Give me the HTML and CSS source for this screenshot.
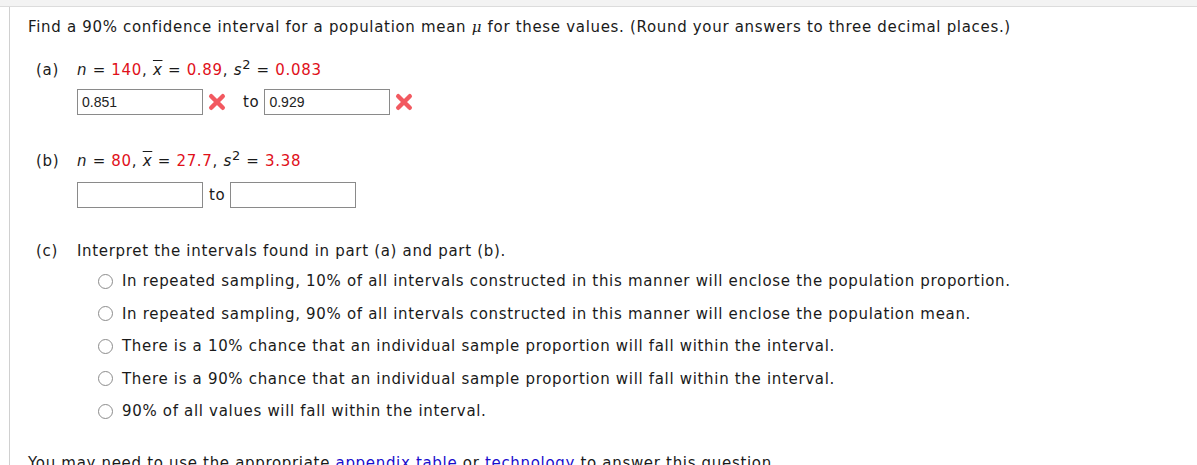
FILE: index.html
```html
<!DOCTYPE html>
<html>
<head>
<meta charset="utf-8">
<link rel="stylesheet" href="styles.css">
</head>
<body>
<div class="topband"></div>
<div class="panel">
  <p class="intro">Find a 90% confidence interval for a population mean <i class="mu">μ</i> for these values. (Round your answers to three decimal places.)</p>

  <div class="part part-a">
    <span class="lbl">(a)</span>
    <span class="given"><i>n</i> = <span class="val">140</span>, <i class="xbar">x</i> = <span class="val">0.89</span>, <i class="s">s</i><sup>2</sup> = <span class="val">0.083</span></span>
  </div>
  <div class="answers ans-a">
    <span class="box">0.851</span>
    <svg class="wrong" width="18" height="18" viewBox="0 0 18 18"><path d="M3.2 3.2 L14.8 14.8 M14.8 3.2 L3.2 14.8" stroke="#f25960" stroke-width="4.4" stroke-linecap="round"/></svg>
    <span class="to to-wide">to</span>
    <span class="box">0.929</span>
    <svg class="wrong" width="18" height="18" viewBox="0 0 18 18"><path d="M3.2 3.2 L14.8 14.8 M14.8 3.2 L3.2 14.8" stroke="#f25960" stroke-width="4.4" stroke-linecap="round"/></svg>
  </div>

  <div class="part part-b">
    <span class="lbl">(b)</span>
    <span class="given"><i>n</i> = <span class="val">80</span>, <i class="xbar">x</i> = <span class="val">27.7</span>, <i class="s">s</i><sup>2</sup> = <span class="val">3.38</span></span>
  </div>
  <div class="answers ans-b">
    <span class="box"></span>
    <span class="to">to</span>
    <span class="box"></span>
  </div>

  <div class="part part-c">
    <span class="lbl">(c)</span>
    <span class="given">Interpret the intervals found in part (a) and part (b).</span>
  </div>
  <ul class="choices">
    <li><span class="radio"></span>In repeated sampling, 10% of all intervals constructed in this manner will enclose the population proportion.</li>
    <li><span class="radio"></span>In repeated sampling, 90% of all intervals constructed in this manner will enclose the population mean.</li>
    <li><span class="radio"></span>There is a 10% chance that an individual sample proportion will fall within the interval.</li>
    <li><span class="radio"></span>There is a 90% chance that an individual sample proportion will fall within the interval.</li>
    <li><span class="radio"></span>90% of all values will fall within the interval.</li>
  </ul>

  <p class="note">You may need to use the appropriate <a href="#">appendix table</a> or <a href="#">technology</a> to answer this question.</p>
</div>
</body>
</html>
```
FILE: styles.css
```css
html, body {
  margin: 0;
  padding: 0;
  background: #fff;
}
body {
  font-family: "DejaVu Sans", Verdana, sans-serif;
  font-size: 15px;
  line-height: 20px;
  letter-spacing: 0.68px;
  color: #1a1a1a;
  overflow: hidden;
  height: 465px;
}
.topband {
  height: 6px;
  background: #f3f3f3;
  border-bottom: 1px solid #dcdcdc;
}
.panel {
  margin-left: 9px;
  border-left: 1px solid #d0d0d0;
  padding-left: 18px;
  padding-top: 10px;
  height: 600px;
}
.intro {
  margin: 0;
}
.mu {
  font-family: "DejaVu Serif", serif;
}
.part {
  display: flex;
  margin-left: 8px;
}
.lbl {
  width: 41px;
  flex: none;
}
.part-a { margin-top: 23px; }
.part-b { margin-top: 36px; }
.part-c { margin-top: 33px; }
.val { color: #e0101a; }
.xbar {
  text-decoration: overline;
  text-decoration-thickness: 1px;
}
sup {
  font-size: 13px;
  line-height: 0;
  vertical-align: 6px;
}
.answers {
  display: flex;
  align-items: center;
  margin-left: 49px;
  height: 26px;
}
.ans-a { margin-top: 9px; }
.ans-b { margin-top: 11px; }
.box {
  display: inline-block;
  box-sizing: border-box;
  width: 126px;
  height: 26px;
  border: 1px solid #8a8a8a;
  font-family: "Liberation Sans", Arial, sans-serif;
  font-size: 14px;
  letter-spacing: 0;
  line-height: 24px;
  padding-left: 4px;
  color: #222;
}
.wrong {
  margin-left: 5px;
  flex: none;
}
.to {
  margin: 0 5px 0 6px;
}
.to-wide {
  margin: 0 5px 0 17px;
}
.choices {
  list-style: none;
  margin: 10px 0 0 70px;
  padding: 0;
}
.choices li {
  display: flex;
  align-items: center;
  height: 20px;
  margin-bottom: 12.5px;
}
.radio {
  display: inline-block;
  box-sizing: border-box;
  width: 15px;
  height: 15px;
  border: 1.5px solid #8c8c8c;
  border-radius: 50%;
  margin-right: 9px;
  flex: none;
}
.note {
  margin: 32px 0 0 0;
}
.note a {
  color: #1a0dcc;
  text-decoration: none;
}
```
